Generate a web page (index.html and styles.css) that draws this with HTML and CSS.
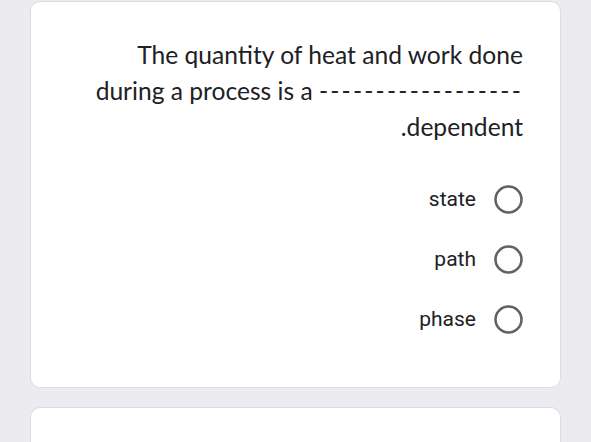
FILE: index.html
```html
<!DOCTYPE html>
<html lang="en">
<head>
<meta charset="utf-8">
<title>Question</title>
<link rel="stylesheet" href="styles.css">
</head>
<body>
<div class="page">
  <div class="card card-main">
    <div class="question">
      <span class="q-line">The quantity of heat and work done</span>
      <span class="q-line"><span>during a process is a </span><span class="blank">------------------</span></span>
      <span class="q-line">.dependent</span>
    </div>
    <div class="options">
      <label class="option"><span class="opt-text">state</span><svg class="radio" viewBox="0 0 29 29" width="29" height="29"><circle cx="14.5" cy="14.5" r="13" fill="none" stroke="#5f6368" stroke-width="2.6"/></svg></label>
      <label class="option"><span class="opt-text">path</span><svg class="radio" viewBox="0 0 29 29" width="29" height="29"><circle cx="14.5" cy="14.5" r="13" fill="none" stroke="#5f6368" stroke-width="2.6"/></svg></label>
      <label class="option"><span class="opt-text">phase</span><svg class="radio" viewBox="0 0 29 29" width="29" height="29"><circle cx="14.5" cy="14.5" r="13" fill="none" stroke="#5f6368" stroke-width="2.6"/></svg></label>
    </div>
  </div>
  <div class="card card-next"></div>
</div>
</body>
</html>
```
FILE: styles.css
```css
html, body {
  margin: 0;
  padding: 0;
  background: #ececf0;
}
body {
  height: 442px;
  overflow: hidden;
}
.page {
  display: flex;
  flex-direction: column;
  gap: 19px;
  padding: 1px 30px 0 30px;
}
.card {
  background: #ffffff;
  border: 1px solid #dadce0;
  border-radius: 10px;
  box-sizing: border-box;
  width: 531px;
}
.card-main {
  height: 387px;
  padding: 35px 37px 0 0;
}
.card-next {
  height: 35px;
  border-bottom: none;
  border-radius: 10px 10px 0 0;
}
.question {
  display: flex;
  flex-direction: column;
  align-items: flex-end;
  font-family: "Lato", "Open Sans", sans-serif;
  font-size: 24.6px;
  line-height: 36px;
  color: #202124;
}
.q-line {
  display: block;
  white-space: pre;
}
.blank {
  letter-spacing: 2.2px;
}
.options {
  display: flex;
  flex-direction: column;
  margin-top: 24px;
}
.option {
  display: flex;
  justify-content: flex-end;
  align-items: center;
  gap: 18px;
  height: 60px;
}
.opt-text {
  font-family: "Roboto", "Liberation Sans", sans-serif;
  font-size: 21px;
  color: #202124;
}
.radio {
  display: block;
  flex: none;
}
```
